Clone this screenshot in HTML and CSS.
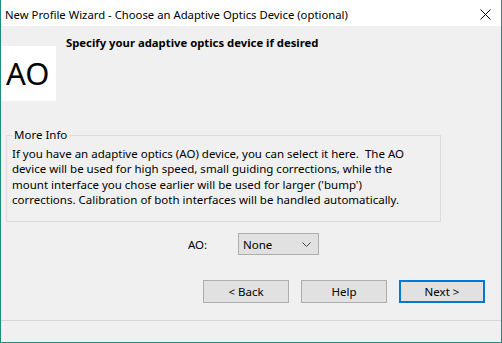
FILE: index.html
```html
<!DOCTYPE html>
<html lang="en">
<head>
    <meta charset="UTF-8">
    <title>New Profile Wizard</title>
    <link rel="stylesheet" href="styles.css">
</head>
<body>
    <div class="window">
        <div class="title-bar">
            <span class="title">New Profile Wizard - Choose an Adaptive Optics Device (optional)</span>
            <svg class="close" width="11" height="11" viewBox="0 0 11 11">
                <path d="M0.5 0.5 L10.5 10.5 M10.5 0.5 L0.5 10.5" stroke="#000" stroke-width="1"/>
            </svg>
        </div>
        <div class="content">
            <div class="header">
                <div class="logo">AO</div>
                <h4 class="heading">Specify your adaptive optics device if desired</h4>
            </div>
            <fieldset class="info-box">
                <legend>More Info</legend>
                <p>If you have an adaptive optics (AO) device, you can select it here.&nbsp; The AO<br>
                device will be used for high speed, small guiding corrections, while the<br>
                mount interface you chose earlier will be used for larger ('bump')<br>
                corrections. Calibration of both interfaces will be handled automatically.</p>
            </fieldset>
            <div class="device-row">
                <span class="device-label">AO:</span>
                <div class="combo">
                    <span>None</span>
                    <svg width="9" height="5" viewBox="0 0 9 5">
                        <path d="M0.5 0.5 L4.5 4.5 L8.5 0.5" fill="none" stroke="#444" stroke-width="1"/>
                    </svg>
                </div>
            </div>
            <div class="buttons">
                <button class="btn" type="button">&lt; Back</button>
                <button class="btn" type="button">Help</button>
                <button class="btn btn-default" type="button">Next &gt;</button>
            </div>
            <div class="separator"></div>
        </div>
    </div>
</body>
</html>
```

FILE: styles.css
```css
body {
    margin: 0;
    font-family: 'Noto Sans', 'Open Sans', sans-serif;
    font-size: 11.5px;
    color: #000;
}

.window {
    width: 502px;
    height: 343px;
    box-sizing: border-box;
    border: 1px solid #1a8f7d;
    border-top: none;
    background-color: #f0f0f0;
    display: flex;
    flex-direction: column;
}

.title-bar {
    height: 26px;
    background-color: white;
    display: flex;
    align-items: center;
    justify-content: space-between;
    padding: 0 10px 0 4px;
}

.title {
    font-size: 11.3px;
    padding-top: 2px;
}

.close {
    margin-top: 2px;
}

.header {
    display: flex;
    align-items: flex-start;
}

.logo {
    width: 55px;
    height: 55px;
    margin-top: 20px;
    background-color: white;
    font-size: 31px;
    line-height: 55px;
    text-indent: 5px;
}

.heading {
    margin: 9px 0 0 10px;
    font-size: 11.3px;
    line-height: 16px;
}

.info-box {
    width: 423px;
    margin: 26px 0 0 5px;
    padding: 0 5px 14px 5px;
    border: 1px solid #dcdcdc;
}

.info-box legend {
    padding: 0 2px;
    line-height: 16px;
}

.info-box p {
    margin: 3px 0 0 0;
    line-height: 15.3px;
}

.device-row {
    display: flex;
    align-items: center;
    margin-top: 11px;
    padding-left: 187px;
}

.device-label {
    width: 50px;
}

.combo {
    width: 68px;
    height: 20px;
    border: 1px solid #adadad;
    background-color: #e1e1e1;
    display: flex;
    align-items: center;
    justify-content: space-between;
    padding: 0 7px 0 4px;
}

.buttons {
    display: flex;
    justify-content: flex-end;
    gap: 12px;
    margin-top: 25px;
    padding-right: 16px;
}

.btn {
    width: 86px;
    height: 23px;
    background-color: #e1e1e1;
    border: 1px solid #adadad;
    font-family: inherit;
    font-size: 11.5px;
    color: #000;
    padding: 0;
}

.btn-default {
    border: 2px solid #0078d7;
}

.separator {
    margin-top: 17px;
    border-top: 1px solid #d5d5d5;
}
```
